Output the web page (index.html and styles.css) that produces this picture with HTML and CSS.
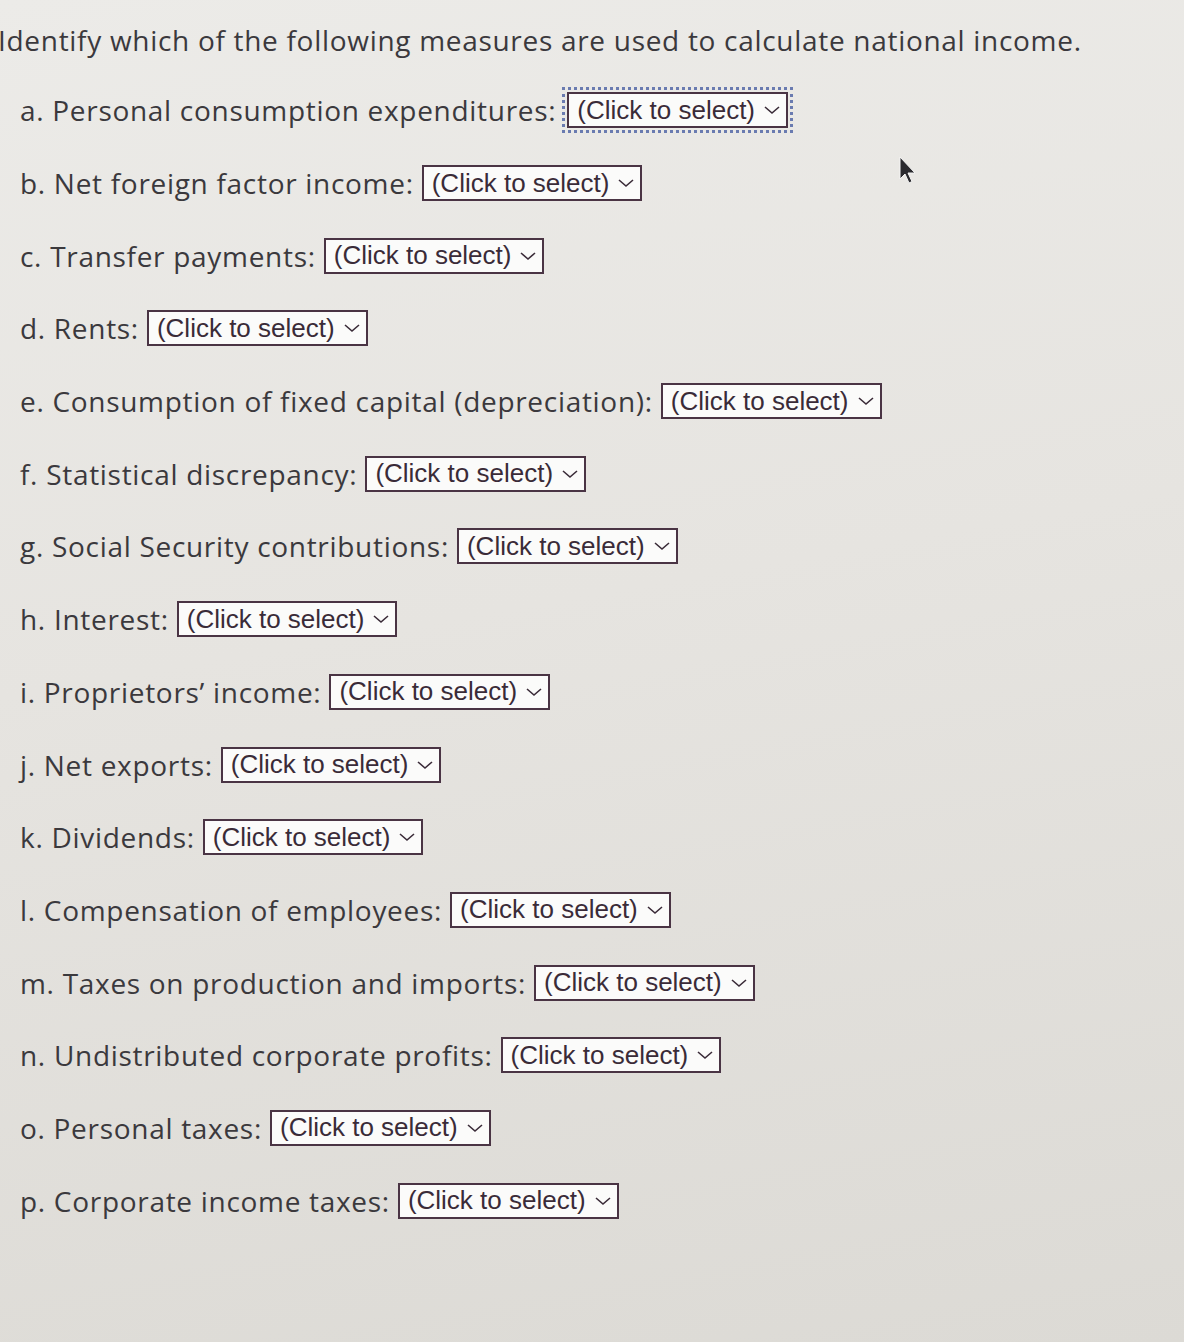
FILE: index.html
```html
<!DOCTYPE html>
<html lang="en">
<head>
    <meta charset="UTF-8">
    <title>National income</title>
    <link rel="stylesheet" href="styles.css">
</head>
<body>
    <div class="question">
        <p class="prompt">Identify which of the following measures are used to calculate national income.</p>

        <div class="item"><span class="label">a. Personal consumption expenditures:</span><span class="focus-ring"><span class="picker">(Click to select)<svg class="chev" viewBox="0 0 16 10"><path d="M1 2l7 6 7-6"/></svg></span></span></div>
        <div class="item"><span class="label">b. Net foreign factor income:</span><span class="picker">(Click to select)<svg class="chev" viewBox="0 0 16 10"><path d="M1 2l7 6 7-6"/></svg></span></div>
        <div class="item"><span class="label">c. Transfer payments:</span><span class="picker">(Click to select)<svg class="chev" viewBox="0 0 16 10"><path d="M1 2l7 6 7-6"/></svg></span></div>
        <div class="item"><span class="label">d. Rents:</span><span class="picker">(Click to select)<svg class="chev" viewBox="0 0 16 10"><path d="M1 2l7 6 7-6"/></svg></span></div>
        <div class="item"><span class="label">e. Consumption of fixed capital (depreciation):</span><span class="picker">(Click to select)<svg class="chev" viewBox="0 0 16 10"><path d="M1 2l7 6 7-6"/></svg></span></div>
        <div class="item"><span class="label">f. Statistical discrepancy:</span><span class="picker">(Click to select)<svg class="chev" viewBox="0 0 16 10"><path d="M1 2l7 6 7-6"/></svg></span></div>
        <div class="item"><span class="label">g. Social Security contributions:</span><span class="picker">(Click to select)<svg class="chev" viewBox="0 0 16 10"><path d="M1 2l7 6 7-6"/></svg></span></div>
        <div class="item"><span class="label">h. Interest:</span><span class="picker">(Click to select)<svg class="chev" viewBox="0 0 16 10"><path d="M1 2l7 6 7-6"/></svg></span></div>
        <div class="item"><span class="label">i. Proprietors’ income:</span><span class="picker">(Click to select)<svg class="chev" viewBox="0 0 16 10"><path d="M1 2l7 6 7-6"/></svg></span></div>
        <div class="item"><span class="label">j. Net exports:</span><span class="picker">(Click to select)<svg class="chev" viewBox="0 0 16 10"><path d="M1 2l7 6 7-6"/></svg></span></div>
        <div class="item"><span class="label">k. Dividends:</span><span class="picker">(Click to select)<svg class="chev" viewBox="0 0 16 10"><path d="M1 2l7 6 7-6"/></svg></span></div>
        <div class="item"><span class="label">l. Compensation of employees:</span><span class="picker">(Click to select)<svg class="chev" viewBox="0 0 16 10"><path d="M1 2l7 6 7-6"/></svg></span></div>
        <div class="item"><span class="label">m. Taxes on production and imports:</span><span class="picker">(Click to select)<svg class="chev" viewBox="0 0 16 10"><path d="M1 2l7 6 7-6"/></svg></span></div>
        <div class="item"><span class="label">n. Undistributed corporate profits:</span><span class="picker">(Click to select)<svg class="chev" viewBox="0 0 16 10"><path d="M1 2l7 6 7-6"/></svg></span></div>
        <div class="item"><span class="label">o. Personal taxes:</span><span class="picker">(Click to select)<svg class="chev" viewBox="0 0 16 10"><path d="M1 2l7 6 7-6"/></svg></span></div>
        <div class="item"><span class="label">p. Corporate income taxes:</span><span class="picker">(Click to select)<svg class="chev" viewBox="0 0 16 10"><path d="M1 2l7 6 7-6"/></svg></span></div>
    </div>

    <svg class="pointer" viewBox="0 0 20 30"><path d="M2 1v22l5-5 4 9 3-1.5-4-8.5h7z"/></svg>
</body>
</html>
```

FILE: styles.css
```css
/* Question page */
html, body {
    height: 100%;
}
body {
    margin: 0;
    background: linear-gradient(170deg, #ecebe8 0%, #e6e4e0 45%, #dcdad5 100%);
    font-family: "Open Sans", Lato, sans-serif;
    color: #3b393d;
    overflow: hidden;
    position: relative;
}
.question {
    padding: 12px 0 0 20px;
}
.prompt {
    margin: 0 0 6px -22px;
    font-size: 28px;
    letter-spacing: 0.7px;
    line-height: 56px;
    white-space: nowrap;
}
.item {
    display: flex;
    align-items: center;
    gap: 8px;
    height: 72.7px;
}
.label {
    font-size: 28px;
    letter-spacing: 0.7px;
}
.picker {
    display: inline-flex;
    align-items: center;
    gap: 9px;
    height: 32px;
    padding: 0 6px 0 8px;
    background: #fbfbfa;
    border: 2px solid #4a3444;
    font-family: "Liberation Sans", Arial, sans-serif;
    font-size: 26px;
    color: #3a2b38;
}
.chev {
    width: 16px;
    height: 10px;
    fill: none;
    stroke: #3a2b38;
    stroke-width: 1.6;
}
.focus-ring {
    display: inline-flex;
    padding: 3px;
    outline: 3px dotted #6a7bb0;
    outline-offset: -1px;
}
.pointer {
    position: absolute;
    left: 898px;
    top: 156px;
    width: 20px;
    height: 30px;
    fill: #2a2a2e;
    stroke: #f4f4f4;
    stroke-width: 1;
}
```
